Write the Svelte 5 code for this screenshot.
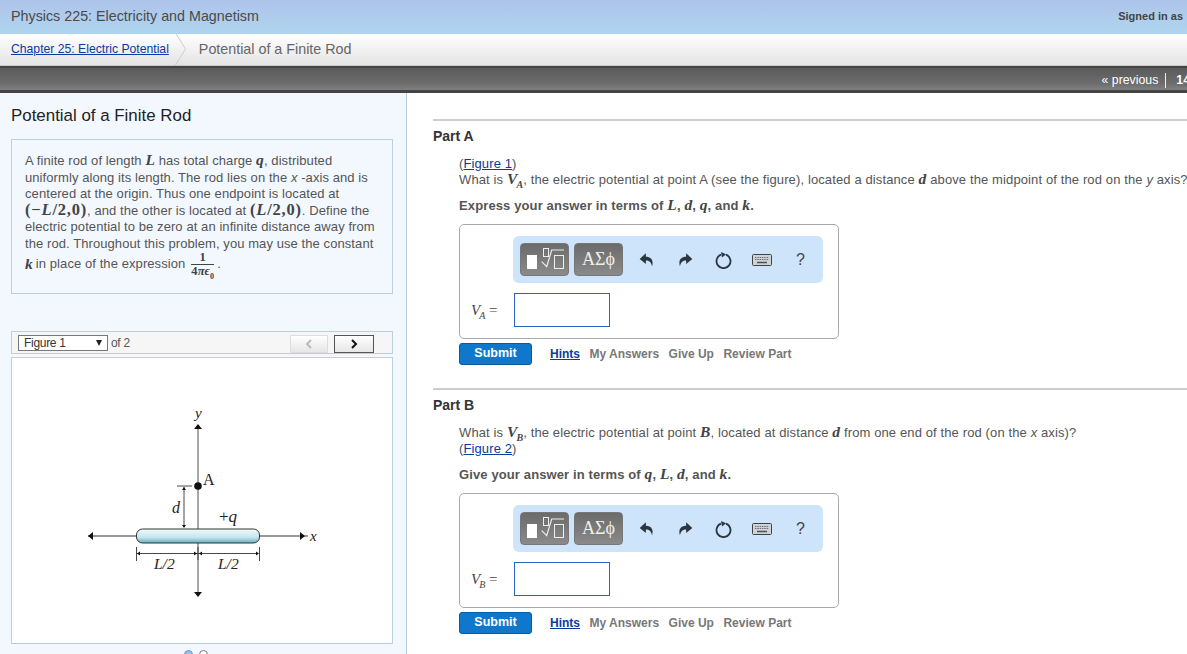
<script lang="ts">
	const parts = [
		{ name: "Part A", sub: "A" },
		{ name: "Part B", sub: "B" }
	];
	const links = ["My Answers", "Give Up", "Review Part"];
</script>

{#snippet frac()}
	<span class="frac"><span class="num">1</span><span class="den">4<i>πϵ</i><sub>0</sub></span></span>
{/snippet}

{#snippet tools()}
	<div class="tools">
		<div class="tool-btn">
			<svg width="49" height="33" viewBox="0 0 49 33" fill="none">
				<rect x="7" y="12" width="10" height="14" fill="#fff" />
				<rect x="23.5" y="5.5" width="5" height="8" stroke="#eee" />
				<path d="M21.700 18.700l5 5 5-16.700H44" stroke="#eee" stroke-width="1.200" />
				<rect x="34.500" y="12.500" width="9" height="13" stroke="#eee" />
			</svg>
		</div>
		<div class="tool-btn symbols">ΑΣϕ</div>
		<svg class="ic first" width="18" height="18" viewBox="0 0 16 16"><path d="M7 2L1.500 7 7 11.500V8.500c3 0 4.500 1.500 5.500 5 1.500-5-.5-8.500-5.500-8.500z" fill="#2b3640" /></svg>
		<svg class="ic" width="18" height="18" viewBox="0 0 16 16"><path d="M9 2l5.500 5L9 11.500V8.500c-3 0-4.500 1.500-5.500 5-1.500-5 .5-8.500 5.500-8.500z" fill="#2b3640" /></svg>
		<svg class="ic reload" width="18" height="18" viewBox="0 0 18 18" fill="none"><path d="M6 3.600a7 7 0 1 0 5 0" stroke="#2b3640" stroke-width="1.800" /><path d="M6 1l5 2.200L7 6.500z" fill="#2b3640" /></svg>
		<svg class="ic kbd" width="20" height="12" viewBox="0 0 20 12" fill="none"><rect x=".5" y=".5" width="19" height="11" rx="1" fill="#cfd3d6" stroke="#3c444b" /><path d="M3 3.500h14M3 5.500h14" stroke="#6a7277" stroke-dasharray="1.500 .8" /><path d="M5 8.500h10" stroke="#4a5258" stroke-width="1.500" /></svg>
		<span class="help">?</span>
	</div>
{/snippet}

<div class="page">
	<header class="top">
		<span class="course">Physics 225: Electricity and Magnetism</span>
		<span class="signed">Signed in as</span>
	</header>

	<nav class="crumbs">
		<a href="#ch">Chapter 25: Electric Potential</a>
		<svg width="11" height="32" viewBox="0 0 11 32" fill="none"><path d="M.5 0l10 16-10 16" stroke="#ccc" /></svg>
		<span>Potential of a Finite Rod</span>
	</nav>

	<div class="bar">
		<span class="pager"><span class="prev">« previous</span><span class="count">14</span></span>
	</div>

	<main class="main">
		<aside class="left">
			<h1>Potential of a Finite Rod</h1>
			<div class="intro">
				A finite rod of length <i class="m">L</i> has total charge <i class="m">q</i>, distributed<br />
				uniformly along its length. The rod lies on the <i>x</i> -axis and is<br />
				centered at the origin. Thus one endpoint is located at<br />
				<span class="m big">(−<i>L</i>/2,0)</span>, and the other is located at <span class="m big">(<i>L</i>/2,0)</span>. Define the<br />
				electric potential to be zero at an infinite distance away from<br />
				the rod. Throughout this problem, you may use the constant<br />
				<span class="last"><i class="m">k</i> in place of the expression {@render frac()}.</span>
			</div>

			<div class="fig-bar">
				<div class="select"><span>Figure 1</span><span class="caret"></span></div>
				<span>of 2</span>
				<div class="pager-btn off"><svg width="8" height="10" viewBox="0 0 8 10" fill="none"><path d="M6 1L2 5l4 4" stroke="#bbb" stroke-width="2" /></svg></div>
				<div class="pager-btn"><svg width="8" height="10" viewBox="0 0 8 10" fill="none"><path d="M2 1l4 4-4 4" stroke="#111" stroke-width="2" /></svg></div>
			</div>

			<div class="figure">
				<svg width="380" height="285" viewBox="0 0 380 285">
					<defs>
						<linearGradient id="rod" x1="0" y1="0" x2="0" y2="1">
							<stop offset="0" stop-color="#f2fafc" />
							<stop offset=".6" stop-color="#c4e5ee" />
							<stop offset="1" stop-color="#62b0c4" />
						</linearGradient>
					</defs>
					<g transform="translate(-12,-358)" font-family="Liberation Serif, serif" fill="#222">
						<path d="M198 428V593M88 536H136M260 536H308" stroke="#777" stroke-width="1.300" fill="none" />
						<path d="M198 424l-4 5h8zM198 597l-4-5h8zM88 536l5-4v8zM305 536l-5-4v8z" fill="#111" />
						<rect x="136.500" y="529" width="123" height="14" rx="6" fill="url(#rod)" stroke="#333" />
						<circle cx="198" cy="486" r="3.800" fill="#111" />
						<path d="M177 486H192M184 487V527M136.500 547V561M259.500 547V561M137 553.500H258M198 547V560" stroke="#333" stroke-width=".9" fill="none" />
						<path d="M184 487l-2 3h4zM184 528l-2-3h4zM137 553.500l3-2v4zM197 553.500l-3-2v4zM199 553.500l3-2v4zM259 553.500l-3-2v4z" fill="#111" />
						<text x="195" y="418" font-size="15" font-style="italic">y</text>
						<text x="203" y="485" font-size="16">A</text>
						<text x="172" y="513" font-size="16" font-style="italic">d</text>
						<text x="219" y="522" font-size="17">+<tspan font-style="italic">q</tspan></text>
						<text x="310" y="541" font-size="15" font-style="italic">x</text>
						<text x="154" y="569" font-size="15.500" font-style="italic">L/2</text>
						<text x="218" y="569" font-size="15.500" font-style="italic">L/2</text>
					</g>
				</svg>
			</div>
			<div class="dots"><span class="dot on"></span><span class="dot"></span></div>
		</aside>

		<section class="right">
			{#each parts as part, idx}
				<div class="part">
					<h2>{part.name}</h2>
					{#if idx === 0}
						<p class="q"><span class="figlink">(<a href="#f1">Figure 1</a>)</span><br />
						What is <span class="m">V<sub>A</sub></span>, the electric potential at point A (see the figure), located a distance <i class="m">d</i> above the midpoint of the rod on the <i>y</i> axis?</p>
						<p class="ask">Express your answer in terms of <i class="m">L</i>, <i class="m">d</i>, <i class="m">q</i>, and <i class="m">k</i>.</p>
					{:else}
						<p class="q">What is <span class="m">V<sub>B</sub></span>, the electric potential at point <i class="m">B</i>, located at distance <i class="m">d</i> from one end of the rod (on the <i>x</i> axis)?<br />
						<span class="figlink">(<a href="#f2">Figure 2</a>)</span></p>
						<p class="ask">Give your answer in terms of <i class="m">q</i>, <i class="m">L</i>, <i class="m">d</i>, and <i class="m">k</i>.</p>
					{/if}
					<div class="answer">
						{@render tools()}
						<div class="entry">
							<span class="label"><i>V<sub>{part.sub}</sub></i> =</span>
							<div class="input"></div>
						</div>
					</div>
					<div class="actions">
						<div class="submit">Submit</div>
						<a class="hints" href="#h">Hints</a>
						{#each links as link}
							<span class="act">{link}</span>
						{/each}
					</div>
				</div>
			{/each}
		</section>
	</main>
</div>

<style>
	:global(body) {
		margin: 0;
		overflow: hidden;
		background: #fff;
	}

	.page {
		width: 1187px;
		height: 654px;
		overflow: hidden;
		font-family: "Liberation Sans", Arial, sans-serif;
		font-size: 13px;
		color: #555;
	}

	/* Header */
	.top {
		height: 34px;
		display: flex;
		align-items: center;
		justify-content: space-between;
		padding: 0 4px 2px 11px;
		box-sizing: border-box;
		background: linear-gradient(#aec3ea, #aed6ef);
	}
	.course { font-size: 14.300px; color: #4a4a4a; }
	.signed { font-size: 11px; font-weight: bold; color: #444; }

	.crumbs {
		height: 32px;
		display: flex;
		align-items: center;
		padding: 0 0 2px 11px;
		box-sizing: border-box;
		background: linear-gradient(#fff, #e4e4e4);
		border-bottom: 1px solid #c8c8c8;
		font-size: 14.300px;
		color: #666;
	}
	.crumbs a { font-size: 12.200px; color: #0b3aa0; }
	.crumbs svg { margin: 0 13px 0 6px; }

	.bar {
		height: 27px;
		display: flex;
		align-items: center;
		justify-content: flex-end;
		box-sizing: border-box;
		padding-top: 2px;
		background: linear-gradient(#5b5b5b, #6c6c6c 70%, #808080);
		border-top: 2px solid #444;
		border-bottom: 3px solid #444;
		color: #fff;
		font-size: 12.300px;
	}
	.pager { display: flex; align-items: center; margin-right: -3px; }
	.prev { padding-right: 7px; border-right: 1px solid #eee; line-height: 15px; }
	.count { padding-left: 10px; font-weight: bold; }

	/* Layout */
	.main {
		display: grid;
		grid-template-columns: 407px 1fr;
		height: 561px;
	}

	/* Left column */
	.left {
		background: #f3f8ff;
		border-right: 1px solid #b5cde0;
		padding: 0 13px 0 11px;
	}
	h1 {
		margin: 13px 0 13px;
		font-size: 16.900px;
		line-height: 20px;
		font-weight: normal;
		color: #222;
	}
	.intro {
		height: 155px;
		box-sizing: border-box;
		border: 1px solid #b9cfe2;
		padding: 13px 13px 0;
		line-height: 16.500px;
		letter-spacing: .08px;
		white-space: nowrap;
	}
	.m {
		font-family: "Liberation Serif", serif;
		font-size: 15.500px;
		line-height: 0;
		font-weight: bold;
		font-style: italic;
		color: #444;
	}
	.big { font-style: normal; font-size: 16.500px; letter-spacing: .8px; }
	.m sub, .label sub { font-size: 10px; line-height: 0; margin-left: -1px; }
	.last { display: inline-flex; align-items: center; gap: 3px; margin-top: 1px; height: 22px; }
	.frac {
		display: inline-flex;
		flex-direction: column;
		align-items: center;
		margin-left: 3px;
		font-family: "Liberation Serif", serif;
		font-weight: bold;
		font-size: 12.500px;
		line-height: 13px;
		color: #444;
	}
	.num { border-bottom: 1px solid #444; width: 100%; text-align: center; }
	.den sub { font-size: 8px; line-height: 0; }

	.fig-bar {
		height: 23px;
		margin-top: 37px;
		box-sizing: border-box;
		border: 1px solid #b9cfe2;
		background: #f6f6f6;
		display: flex;
		align-items: center;
		gap: 3px;
		padding-left: 6px;
		font-size: 12px;
		letter-spacing: -.3px;
	}
	.select {
		width: 90px;
		height: 16px;
		box-sizing: border-box;
		border: 1px solid #777;
		background: #fff;
		color: #333;
		display: flex;
		align-items: center;
		justify-content: space-between;
		padding: 0 5px;
	}
	.caret {
		border-left: 3px solid transparent;
		border-right: 3px solid transparent;
		border-top: 6px solid #222;
	}
	.pager-btn {
		width: 40px;
		height: 18px;
		margin: 3px 18px 0 3px;
		box-sizing: border-box;
		border: 1px solid #555;
		background: linear-gradient(#fff, #e6e6e6);
		display: flex;
		align-items: center;
		justify-content: center;
	}
	.pager-btn.off {
		width: 38px;
		margin: 3px 0 0 auto;
		border-color: #ddd;
	}

	.figure {
		height: 287px;
		margin-top: 3px;
		box-sizing: border-box;
		border: 1px solid #b9cfe2;
		border-bottom-color: #b9c8dc;
		background: #fff;
	}
	.dots {
		display: flex;
		justify-content: center;
		gap: 6px;
		padding: 6px 12px 0 0;
	}
	.dot {
		width: 9px;
		height: 9px;
		box-sizing: border-box;
		border: 1px solid #777;
		border-radius: 50%;
		background: #fff;
	}
	.dot.on { background: #9cc0ec; border-color: #6e93c4; }

	/* Right column */
	.right {
		padding: 26px 0 0 26px;
		overflow: hidden;
	}
	.part {
		height: 269px;
		box-sizing: border-box;
		border-top: 2px solid #ccc;
		white-space: nowrap;
	}
	h2 {
		margin: 7px 0 0;
		font-size: 14px;
		line-height: 17px;
		font-weight: bold;
		color: #333;
	}
	.q, .ask { margin: 0 0 0 26px; line-height: 16px; letter-spacing: .12px; }
	.q { padding-top: 11px; }
	.figlink a { color: #0b3aa0; }
	.ask {
		margin-top: 10px;
		font-weight: bold;
		color: #555;
		height: 16px;
	}
	.answer {
		margin: 10px 0 0 26px;
		width: 380px;
		height: 115px;
		box-sizing: border-box;
		border: 1px solid #aaa;
		border-radius: 5px;
		padding: 11px 15px 0 53px;
	}

	.tools {
		height: 47px;
		background: #cde4fb;
		border-radius: 6px;
		display: flex;
		align-items: center;
		padding-left: 7px;
		box-sizing: border-box;
	}
	.tool-btn {
		width: 49px;
		height: 33px;
		margin-right: 5px;
		border-radius: 4px;
		background: linear-gradient(#6b6b6b, #8a8a8a);
		box-sizing: border-box;
		border: 1px solid #777;
		display: flex;
		align-items: center;
		justify-content: center;
	}
	.tool-btn svg { flex: none; }
	.symbols {
		font-family: "Liberation Serif", serif;
		font-size: 18px;
		color: #eee;
	}
	.ic { flex: none; margin-left: 20px; }
	.ic.first { margin-left: 10px; }
	.ic.reload { margin-left: 21px; }
	.ic.kbd { margin-left: 19px; }
	.help { margin-left: 24px; font-size: 16px; color: #444; }

	.entry {
		display: flex;
		align-items: center;
		margin-top: 10px;
		margin-left: -42px;
	}
	.label {
		width: 43px;
		font-family: "Liberation Serif", serif;
		font-size: 15px;
		color: #444;
	}
	.input {
		width: 96px;
		height: 34px;
		box-sizing: border-box;
		border: 1px solid #2a62c4;
		background: #fff;
	}

	.actions {
		display: flex;
		align-items: center;
		margin: 4px 0 0 26px;
		font-size: 12px;
		font-weight: bold;
		color: #777;
	}
	.submit {
		width: 73px;
		height: 22px;
		box-sizing: border-box;
		border: 1px solid #0b5a9c;
		border-radius: 3px;
		background: #0f78cc;
		color: #fff;
		font-size: 12.500px;
		line-height: 19px;
		text-align: center;
		margin-right: 18px;
	}
	.hints { color: #0b3aa0; margin-right: 9.500px; }
	.act { margin-right: 9.500px; }
</style>
